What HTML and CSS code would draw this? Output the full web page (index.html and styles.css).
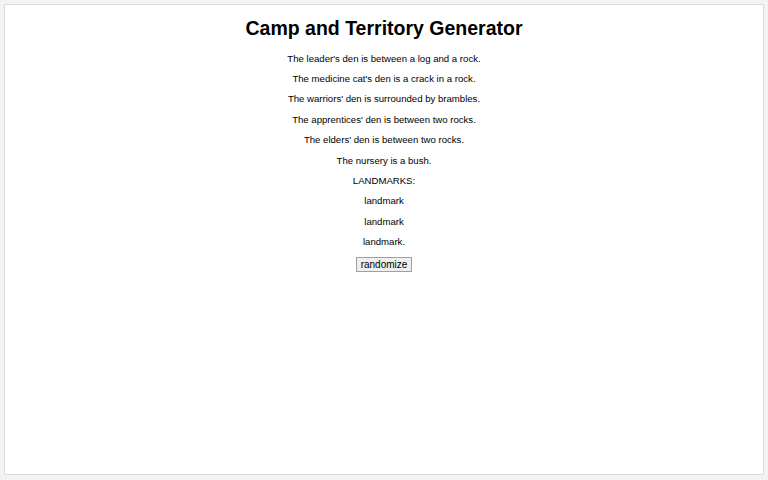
FILE: index.html
```html
<!DOCTYPE html>
<html>
<head>
<meta charset="utf-8">
<link rel="stylesheet" href="styles.css">
</head>
<body>
<div class="panel">
  <h1 class="title">Camp and Territory Generator</h1>
  <div class="lines">
    <p>The leader's den is between a log and a rock.</p>
    <p>The medicine cat's den is a crack in a rock.</p>
    <p>The warriors' den is surrounded by brambles.</p>
    <p>The apprentices' den is between two rocks.</p>
    <p>The elders' den is between two rocks.</p>
    <p>The nursery is a bush.</p>
    <p>LANDMARKS:</p>
    <p>landmark</p>
    <p>landmark</p>
    <p>landmark.</p>
  </div>
  <button class="btn">randomize</button>
</div>
</body>
</html>
```
FILE: styles.css
```css
html, body { margin: 0; padding: 0; }
body {
  background: #f3f3f3;
  font-family: "Liberation Sans", Arial, sans-serif;
  color: #000;
  padding: 4px 4px 5px 4px;
  height: 480px;
  box-sizing: border-box;
}
.panel {
  background: #fff;
  border: 1px solid #dcdcdc;
  height: 100%;
  box-sizing: border-box;
  display: flex;
  flex-direction: column;
  align-items: center;
}
.title {
  margin: 11px 0 0 0;
  font-size: 19.5px;
  line-height: 24px;
  font-weight: bold;
}
.lines {
  margin-top: 8.5px;
  display: flex;
  flex-direction: column;
  align-items: center;
}
.lines p {
  margin: 0;
  font-size: 9.6px;
  line-height: 20.4px;
}
.btn {
  margin-top: 4px;
  font-family: "Liberation Sans", Arial, sans-serif;
  font-size: 10px;
  line-height: 11px;
  padding: 1px 4px;
  background: #efefef;
  border: 1px solid #a0a0a0;
  border-radius: 0;
  color: #000;
}
```
